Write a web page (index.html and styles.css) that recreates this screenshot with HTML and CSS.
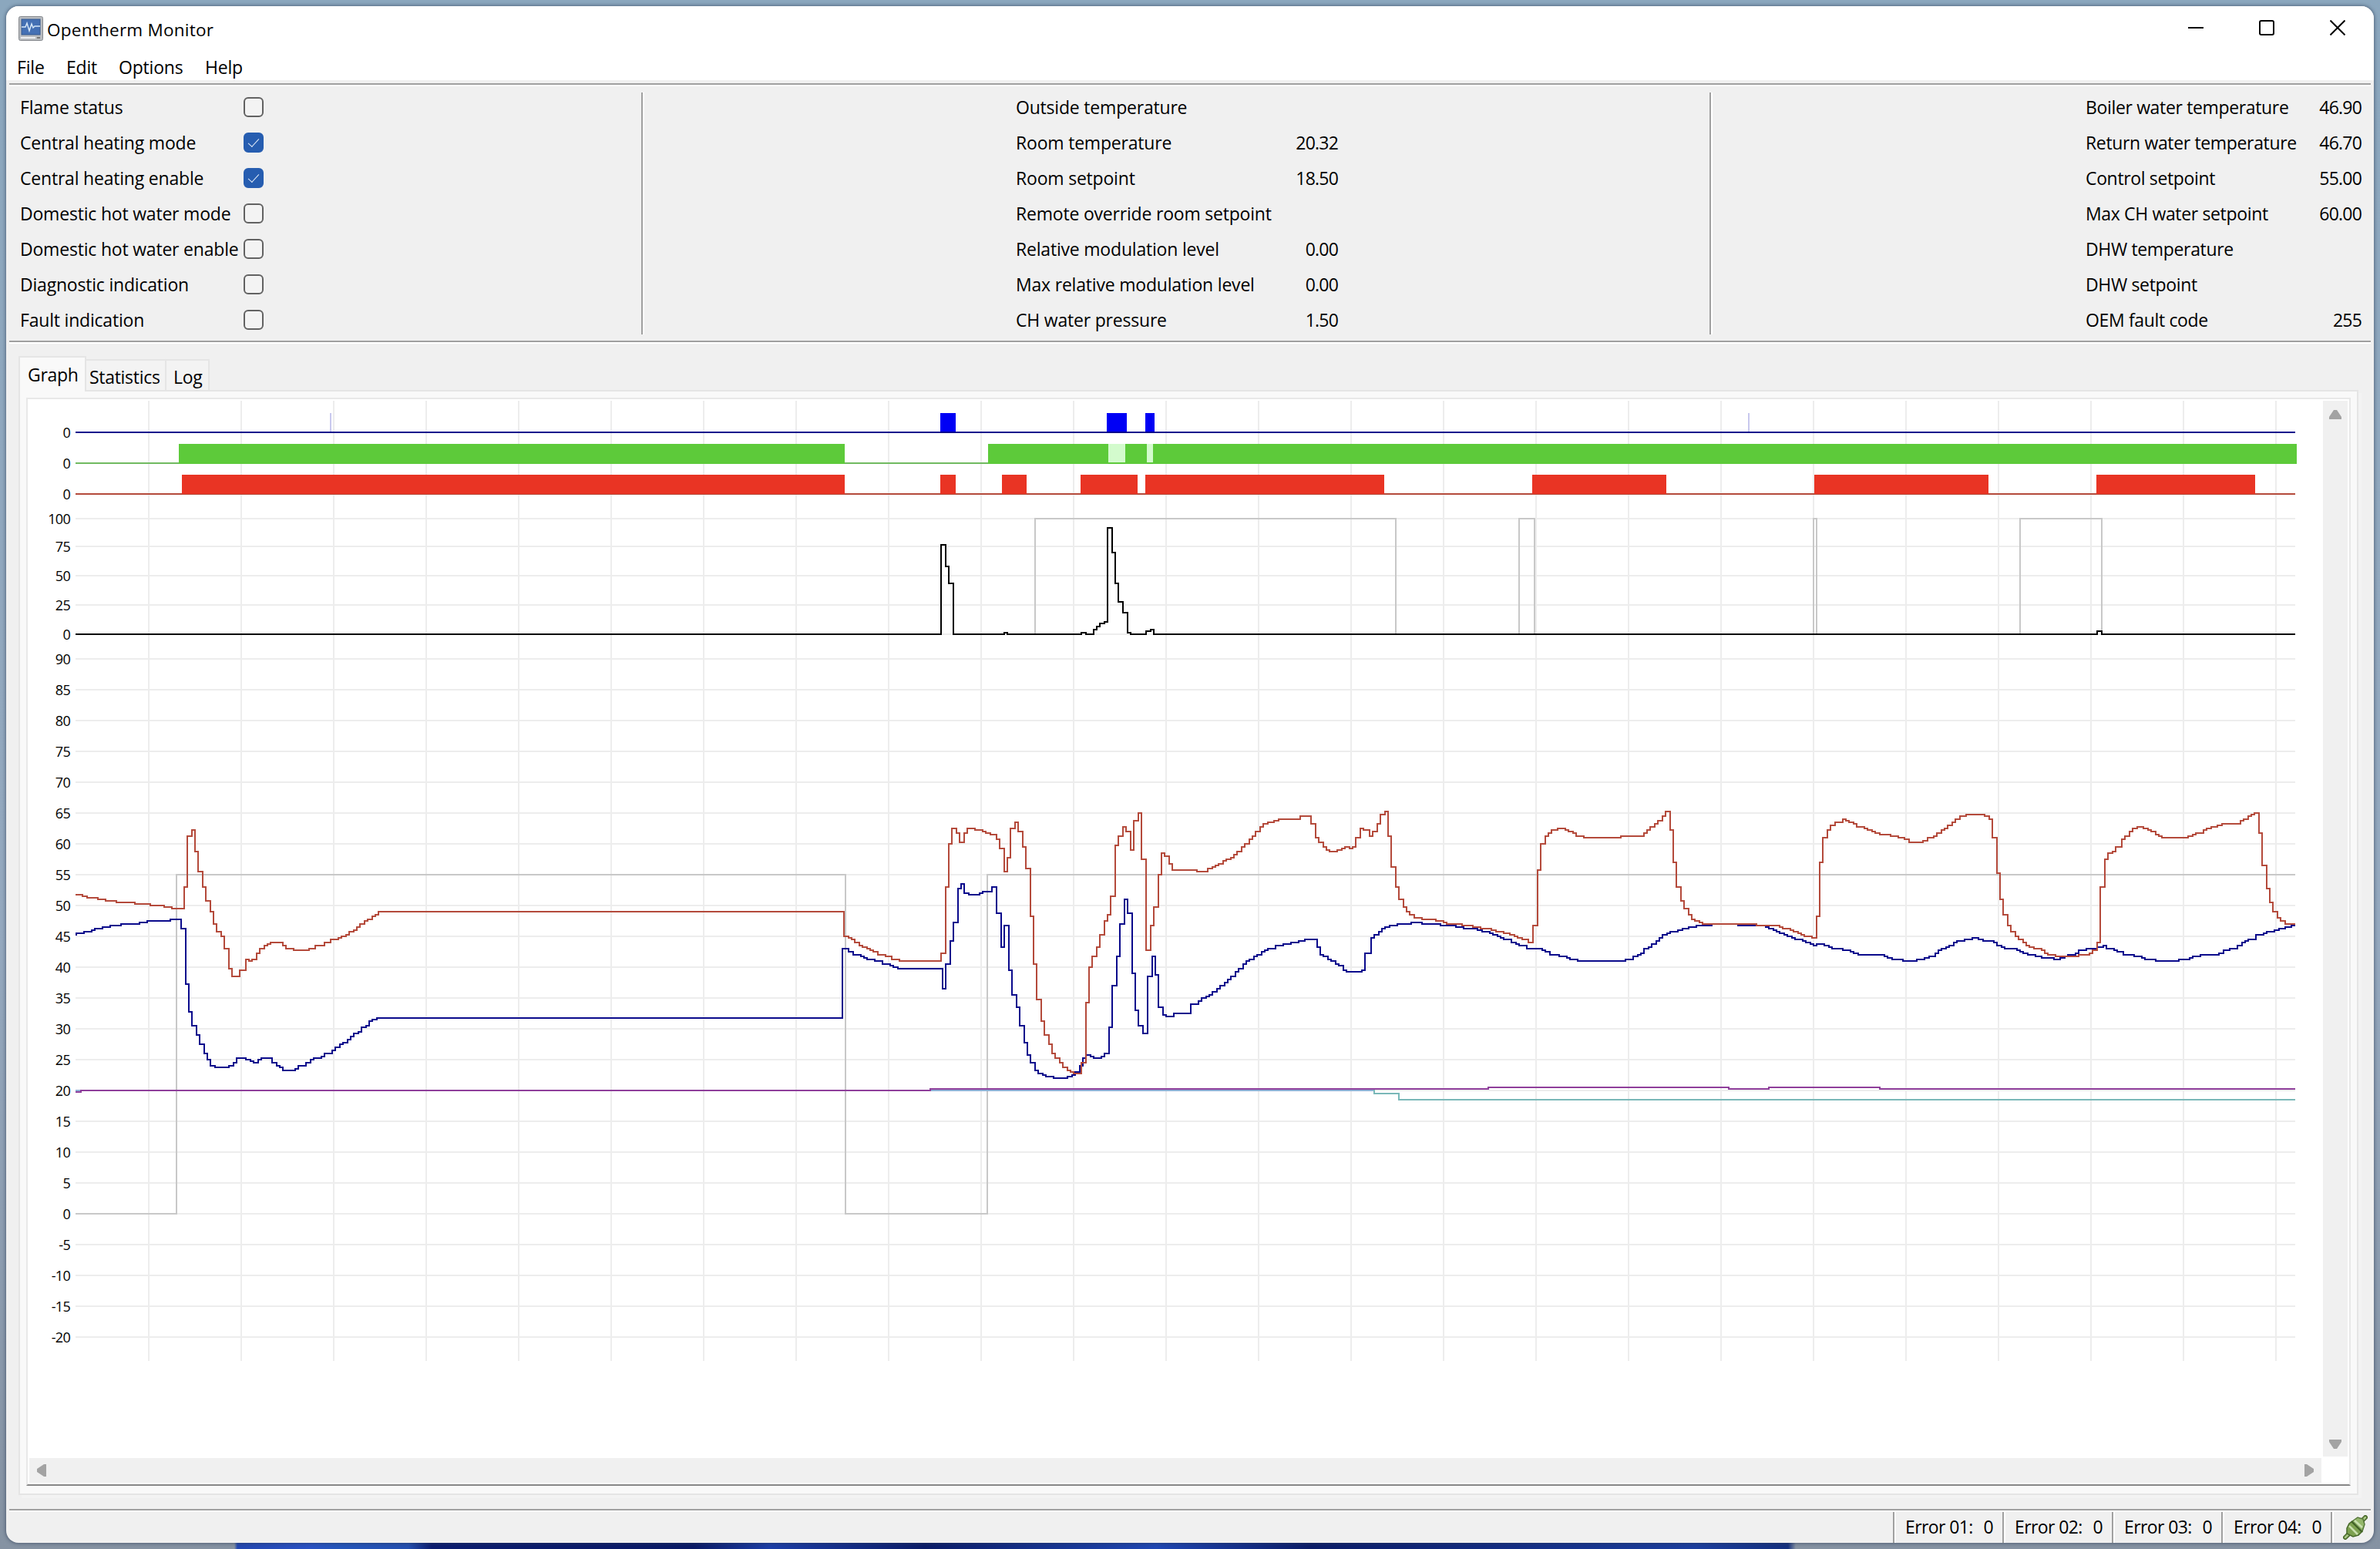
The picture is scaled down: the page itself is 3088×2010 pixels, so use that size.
FILE: index.html
```html
<!DOCTYPE html>
<html lang="en">

<head>
  <meta charset="UTF-8">
  <meta name="viewport" content="width=device-width, initial-scale=1.0">
  <title>Opentherm Monitor</title>
  <link rel="stylesheet" href="styles.css">
</head>

<body>
  <div class="window">
    <header class="title-bar">
      <svg class="app-icon" width="32" height="32" viewBox="0 0 32 32">
        <rect x="0.5" y="0.5" width="31" height="31" rx="2" fill="#b9bcc0" stroke="#85888d" />
        <rect x="4" y="4" width="24" height="20" fill="#4470b4" stroke="#35588f" />
        <path d="M4 14H9L11 9L14 19L17 10L19 15L21 13H28" fill="none" stroke="#d5e6f7" stroke-width="1.500" />
        <path d="M3 28H22" stroke="#eceef0" stroke-width="2" />
        <path d="M24 28H28" stroke="#777" stroke-width="2" />
      </svg>
      <h1>Opentherm Monitor</h1>
      <div class="window-buttons">
        <svg width="20" height="20" viewBox="0 0 20 20"><path d="M0 10H20" /></svg>
        <svg width="20" height="20" viewBox="0 0 20 20"><rect x="1" y="1" width="18" height="18" rx="2" /></svg>
        <svg width="20" height="20" viewBox="0 0 20 20"><path d="M0.500 0.500L19.500 19.500M19.500 0.500L0.500 19.500" /></svg>
      </div>
    </header>

    <nav>
      <ul class="menu-bar">
        <li class="menu-file">File</li>
        <li class="menu-edit">Edit</li>
        <li class="menu-options">Options</li>
        <li class="menu-help">Help</li>
      </ul>
    </nav>

    <hr class="line">

    <section class="status-panel">
      <div class="group flags">
        <label><span>Flame status</span><input type="checkbox"></label>
        <label><span>Central heating mode</span><input type="checkbox" checked></label>
        <label><span>Central heating enable</span><input type="checkbox" checked></label>
        <label><span>Domestic hot water mode</span><input type="checkbox"></label>
        <label><span>Domestic hot water enable</span><input type="checkbox"></label>
        <label><span>Diagnostic indication</span><input type="checkbox"></label>
        <label><span>Fault indication</span><input type="checkbox"></label>
      </div>
      <div class="divider"></div>
      <div class="group room">
        <p><span>Outside temperature</span></p>
        <p><span>Room temperature</span><span>20.32</span></p>
        <p><span>Room setpoint</span><span>18.50</span></p>
        <p><span>Remote override room setpoint</span></p>
        <p><span>Relative modulation level</span><span>0.00</span></p>
        <p><span>Max relative modulation level</span><span>0.00</span></p>
        <p><span>CH water pressure</span><span>1.50</span></p>
      </div>
      <div class="divider"></div>
      <div class="group boiler">
        <p><span>Boiler water temperature</span><span>46.90</span></p>
        <p><span>Return water temperature</span><span>46.70</span></p>
        <p><span>Control setpoint</span><span>55.00</span></p>
        <p><span>Max CH water setpoint</span><span>60.00</span></p>
        <p><span>DHW temperature</span></p>
        <p><span>DHW setpoint</span></p>
        <p><span>OEM fault code</span><span>255</span></p>
      </div>
    </section>

    <hr class="line">

    <main>
      <div class="tabs">
        <div class="tab active">Graph</div>
        <div class="tab tab-statistics">Statistics</div>
        <div class="tab tab-log">Log</div>
      </div>
      <div class="tab-page">
        <div class="graph-frame">
          <svg class="graph" width="2974" height="1370" viewBox="38 520 2974 1370">
            <g id="grid"></g>
            <g id="labels"></g>

            <!-- hot water, central heating and flame on/off bars -->
            <path class="hot-water" d="M98 561H2978" />
            <path class="central" d="M98 601H2978" />
            <path class="boiler" d="M98 641H2978" />
            <path class="tick" d="M429 536V560M2269 536V560" />
            <g id="bars"></g>

            <!-- max modulation and control setpoint -->
            <path class="limit" d="M1343 823V673H1811V823M1971 823V673H1991V823M2353 823V673H2357V823M2621 823V673H2727V823" />
            <path class="limit" d="M98 1575H229V1135H1097V1575H1281V1135H2978" />

            <!-- modulation -->
            <path class="modulation" d="M98 823H1221V707H1227V735H1231V757H1237V823H1303V821H1307V823H1403V821H1409V823H1419V817H1423V813H1427V809H1433V807H1437V685H1443V717H1447V757H1451V781H1457V795H1463V821H1467V823H1487V819H1493V817H1497V823H2721V819H2727V823H2978" />

            <!-- return water -->
            <path class="return" d="M99 1214V1211H109V1209H119V1207H123V1205H133V1203H143V1201H157V1199H181V1197H191V1195H221V1193H235V1205H241V1277H245V1313H249V1331H255V1343H259V1355H265V1367H269V1375H273V1383H279V1385H297V1383H303V1379H307V1373H319V1375H325V1377H329V1379H335V1375H339V1373H353V1379H359V1383H363V1385H367V1389H383V1387H387V1383H397V1379H403V1375H407V1373H417V1371H421V1367H431V1363H435V1359H441V1355H445V1353H451V1349H455V1345H459V1341H465V1339H469V1333H475V1331H479V1325H483V1323H489V1321
              H1093V1231H1101V1235H1107V1239H1117V1241H1121V1243H1125V1245H1135V1247H1145V1251H1155V1253H1159V1255H1165V1257H1223V1283H1227V1251H1233V1221H1237V1197H1243V1153H1247V1147H1251V1159H1257V1161H1271V1159H1275V1157H1287V1151H1293V1185H1299V1229H1303V1201H1309V1259H1313V1291H1319V1307H1323V1331H1329V1353H1333V1369H1337V1379H1343V1389H1347V1393H1353V1395H1357V1397H1367V1399H1385V1397H1391V1395H1395V1391H1401V1383H1405V1373H1409V1369H1415V1371H1419V1373H1429V1371H1433V1367H1439V1333H1443V1279H1449V1241H1453V1199H1459V1167H1463V1185H1469V1263H1473V1311H1477V1331H1483V1341H1489V1267H1495V1241H1499V1265H1503V1307H1509V1317H1513V1319H1523V1315
              H1545V1303H1555V1299H1559V1295H1565V1293H1569V1291H1573V1287H1579V1283H1583V1279H1589V1275H1593V1271H1597V1267H1603V1261H1607V1257H1613V1251H1617V1247H1621V1245H1627V1241H1631V1239H1637V1235H1641V1233H1645V1231H1655V1227H1665V1225H1675V1223H1685V1221H1693V1219H1709V1229H1713V1239H1717V1241H1723V1245H1727V1247H1733V1251H1737V1253H1743V1259H1747V1261H1767V1259H1771V1237H1779V1217H1783V1213H1789V1209H1793V1205H1797V1203H1803V1201H1813V1199H1831V1197H1845V1199
              H1869V1201H1889V1203H1899V1205H1917V1207H1923V1209H1933V1211H1937V1213H1943V1215H1947V1217H1951V1219H1961V1223H1967V1225H1971V1227H1981V1231H2001V1233H2005V1235H2011V1239H2023V1241H2033V1243H2037V1245H2047V1247H2109V1245H2119V1241H2125V1239H2129V1237H2133V1231H2139V1229H2143V1225H2149V1221H2153V1217H2157V1213H2163V1211H2167V1209H2177V1207H2183V1205H2191V1203H2201V1201H2221V1199H2255V1201H2291V1203H2295V1205H2301V1207H2305V1209H2309V1211H2315V1213H2319V1215H2325V1217H2329V1219H2339V1221H2343V1223H2349V1225H2353V1227H2357V1225H2367V1227H2373V1229H2377V1231H2391V1233H2401V1235H2405V1237H2411V1239
              H2445V1241H2449V1243H2455V1245H2469V1247H2487V1245H2497V1243H2503V1241H2511V1237H2515V1233H2519V1231H2525V1229H2529V1227H2535V1223H2539V1221H2549V1219H2559V1217H2567V1219H2573V1221H2587V1223H2591V1227H2597V1229H2601V1231H2617V1233H2621V1235H2625V1237H2631V1239H2641V1241H2649V1243H2665V1245H2673V1243H2679V1241H2683V1239H2693V1237H2697V1233H2707V1231H2721V1229H2729V1227H2733V1231H2743V1233H2747V1235H2755V1239H2769V1241H2779V1243H2783V1245H2797V1247H2827V1245H2841V1243H2845V1241H2855V1239H2879V1237H2885V1233H2893V1231H2903V1227H2909V1223H2913V1221H2917V1219H2927V1213H2937V1211H2941V1209H2951V1207H2957V1205H2965V1203H2973V1201H2978" />

            <!-- boiler water -->
            <path class="boiler" d="M98 1161H107V1163H113V1165H127V1167H137V1169H151V1171H175V1173H195V1175H213V1177H223V1179H239V1151H243V1085H249V1077H253V1105H257V1131H263V1151H267V1169H273V1183H277V1199H281V1209H287V1215H291V1231H297V1257H301V1267H311V1259H319V1245H323V1247H327V1245H333V1237H337V1231H343V1227H347V1225H351V1223H367V1227H371V1231H381V1233H401V1231H409V1227H421V1223H429V1219H439V1217H443V1215H449V1213H453V1209H459V1207H463V1203H467V1199H473V1195H477V1193H483V1189H487V1187H491V1183
              H1095V1215H1101V1217H1105V1219H1109V1223H1115V1227H1119V1229H1125V1231H1129V1233H1133V1235H1139V1239H1149V1241H1157V1245H1167V1247H1221V1237H1227V1151H1231V1095H1235V1075H1241V1081H1245V1093H1251V1081H1255V1075H1265V1077H1275V1079H1279V1081H1285V1083H1293V1089H1297V1101H1303V1131H1307V1113H1311V1075H1317V1067H1321V1079H1327V1099H1331V1127H1337V1189H1341V1251H1345V1297H1351V1325H1355V1343H1361V1355H1365V1367H1369V1373H1375V1379H1379V1385H1385V1389H1389V1391H1393V1393H1403V1379H1409V1301H1413V1255H1417V1241H1423V1229H1427V1213H1433V1195H1437V1187H1441V1163H1447V1097H1451V1085H1457V1073H1461V1079H1467V1103H1471V1065H1477V1055H1481V1115H1487V1233H1493V1201H1497V1177H1503V1135H1507V1107H1511V1111H1517V1121H1521V1129
              H1553V1131H1567V1127H1573V1125H1577V1123H1581V1121H1587V1117H1591V1115H1597V1113H1601V1109H1605V1105H1611V1099H1615V1095H1621V1089H1625V1085H1629V1079H1635V1073H1639V1069H1645V1067H1653V1065H1659V1063H1687V1059H1701V1069H1707V1087H1711V1093H1717V1099H1721V1103H1725V1105H1735V1103H1741V1101H1745V1099H1751V1101H1755V1099H1759V1087H1765V1075H1769V1077H1777V1085H1781V1079H1787V1069H1791V1057H1797V1053H1801V1085H1805V1125H1811V1151H1815V1167H1821V1177H1825V1183H1829V1187H1835V1191H1845V1193
              H1863V1195H1873V1197H1877V1199H1897V1201H1911V1203H1921V1205H1935V1207H1941V1209H1951V1211H1959V1213H1965V1215H1969V1217H1975V1219H1983V1223H1989V1201H1995V1129H1999V1095H2005V1085H2009V1081H2013V1077H2021V1075H2031V1077H2035V1079H2041V1081H2045V1085H2055V1087H2103V1085H2133V1081H2137V1077H2141V1073H2147V1069H2151V1065H2157V1059H2161V1053H2167V1077H2171V1119H2175V1151H2181V1169H2185V1179H2191V1187H2195V1193H2199V1195H2205V1197H2209V1199H2279V1201H2309V1203H2313V1205H2323V1207H2327V1209H2333V1211H2337V1213H2341V1215H2351V1217H2357V1189H2361V1119H2365V1087H2371V1077H2375V1071H2381V1067H2391V1063H2395V1065H2399V1067H2405V1069H2409V1073H2419V1075
              H2423V1077H2429V1079H2433V1081H2439V1083H2453V1085H2463V1087H2471V1089H2477V1093H2495V1091H2501V1087H2509V1085H2513V1081H2519V1077H2523V1075H2527V1071H2533V1067H2537V1063H2543V1059H2551V1057H2575V1059H2581V1063H2585V1087H2591V1133H2595V1167H2599V1187H2605V1201H2609V1209H2615V1215H2619V1219H2625V1223H2629V1227H2633V1229H2639V1231H2649V1233H2653V1237H2657V1239H2667V1241H2697V1239H2711V1237H2715V1233H2721V1223H2725V1151H2731V1115H2735V1107H2741V1105H2745V1099H2753V1089H2757V1085H2763V1079H2767V1075H2773V1073H2781V1075H2787V1077H2791V1079H2797V1083H2801V1085H2805V1087H2839V1085H2845V1083H2849V1081H2859V1077H2863V1075H2869V1073H2877V1071H2883V1069H2907V1065H2911V1063H2917V1059H2921V1057H2925V1055H2931V1081H2935V1123H2941V1153H2945V1171H2949V1183H2955V1191H2959V1195H2965V1199H2978" />

            <!-- room setpoint and room temperature -->
            <path class="setpoint" d="M98 1415H1783V1419H1815V1427H2978" />
            <path class="setpoint-close" d="M98 1415H105M1207 1415H1782" />
            <path class="room-temp" d="M98 1417H105V1415H1207V1413H1931V1411H2243V1413H2295V1411H2439V1413H2978" />
          </svg>

          <div class="scroll-v">
            <svg width="16" height="12" viewBox="0 0 16 12"><path d="M0 12V9L6 0H10L16 9V12Z" /></svg>
            <svg width="16" height="12" viewBox="0 0 16 12"><path d="M0 0V3L6 12H10L16 3V0Z" /></svg>
          </div>
          <div class="scroll-h">
            <svg width="12" height="16" viewBox="0 0 12 16"><path d="M12 0H9L0 6V10L9 16H12Z" /></svg>
            <svg width="12" height="16" viewBox="0 0 12 16"><path d="M0 0H3L12 6V10L3 16H0Z" /></svg>
          </div>
        </div>
      </div>
    </main>

    <hr class="line">

    <footer class="status-bar">
      <div class="cell">Error 01: <span>0</span></div>
      <div class="cell">Error 02: <span>0</span></div>
      <div class="cell">Error 03: <span>0</span></div>
      <div class="cell">Error 04: <span>0</span></div>
      <div class="cell plug">
        <svg width="32" height="32" viewBox="0 0 32 32">
          <path d="M3 29L8 24M24 8L29 3" stroke="#4c6b2c" stroke-width="6" stroke-linecap="round" />
          <path d="M3 29L8 24M24 8L29 3" stroke="#a9c886" stroke-width="2.500" stroke-linecap="round" />
          <path d="M5 17L8 11L12 8L25 21L20 26L13 28L5 24Z" fill="#7da150" stroke="#47682a" stroke-width="1.500" />
          <path d="M12 8L19 3L26 5L28 12L25 21Z" fill="#94b76b" stroke="#55763a" stroke-width="1.500" />
          <path d="M8 14L19 25M15 7L25 16" stroke="#c9dfae" stroke-width="2.500" />
          <path d="M11 8.500L24.500 22" stroke="#3d5c22" stroke-width="1.500" />
        </svg>
      </div>
    </footer>
  </div>

  <script>
    const left = 98;
    const right = 2978;

    let grid = '';
    let labels = '';

    function addLabel(text, y) {
      labels += `<text x="91" y="${y + 7}">${text}</text>`;
    }

    // hour lines
    for (let x = 193; x < right; x += 120) {
      grid += `<path d="M${x} 520V1766" />`;
    }

    for (let y of [561, 601, 641]) {
      addLabel(0, y);
    }

    // modulation scale
    let levels = [[100, 673], [75, 709], [50, 747], [25, 785], [0, 823]];
    for (let [level, y] of levels) {
      grid += `<path d="M${left} ${y}H${right}" />`;
      addLabel(level, y);
    }

    // temperature scale, 8px per degree
    for (let t = 90; t >= -20; t -= 5) {
      let y = 1575 - t * 8;
      grid += `<path d="M${left} ${y}H${right}" />`;
      addLabel(t, y);
    }

    document.querySelector('#grid').innerHTML = grid;
    document.querySelector('#labels').innerHTML = labels;

    let bars = '';
    function addBars(name, y, height, list) {
      for (let [from, to] of list) {
        bars += `<rect class="${name}" x="${from}" y="${y}" width="${to - from}" height="${height}" />`;
      }
    }

    addBars('bar-blue', 536, 24, [[1220, 1240], [1436, 1462], [1486, 1498]]);
    addBars('bar-green', 576, 26, [[232, 1096], [1282, 2980]]);
    addBars('bar-light', 576, 24, [[1438, 1460], [1488, 1496]]);
    addBars('bar-red', 616, 25, [[236, 1096], [1220, 1240], [1300, 1332], [1402, 1476], [1486, 1796], [1988, 2162], [2354, 2580], [2720, 2926]]);
    document.querySelector('#bars').innerHTML = bars;
  </script>
</body>

</html>
```
FILE: styles.css
```css
* {
  box-sizing: border-box;
}

body {
  margin: 0;
  padding: 8px;
  height: 2010px;
  overflow: hidden;
  font-family: "Open Sans", "Noto Sans", sans-serif;
  font-size: 23px;
  color: #000;
  background:
    linear-gradient(90deg, transparent 304px, #2347b0 308px, #2a52c4 400px, #2456bb 440px, #2450b0 530px, #0c1d70 560px, #0a1a66 900px, #1d3fa8 1000px, #0b1c68 1200px, #2048b4 1500px, #0b1c68 1700px, #1c3f9f 2200px, #14307f 2320px, transparent 2330px) left bottom / 100% 8px no-repeat,
    linear-gradient(180deg, #8ba7be, #95a9bf 60%, #8592a2);
}

.window {
  width: 3072px;
  height: 1994px;
  background-color: #f0f0f0;
  border-radius: 16px;
  overflow: hidden;
  box-shadow: 0 0 4px 1px rgba(40, 55, 80, 0.55);
  display: flex;
  flex-direction: column;
}

.title-bar {
  display: flex;
  align-items: center;
  height: 56px;
  padding: 0 37px 0 16px;
  background-color: #fff;
}

.app-icon {
  margin-top: 2px;
}

h1 {
  margin: 4px 0 0 5px;
  font-size: 22.500px;
  font-weight: normal;
  letter-spacing: 0.25px;
}

.window-buttons {
  display: flex;
  gap: 72px;
  margin-left: auto;
}

.window-buttons svg {
  fill: none;
  stroke: #000;
  stroke-width: 2;
}

.menu-bar {
  display: flex;
  height: 40px;
  margin: 0;
  padding: 0 0 0 14px;
  list-style-type: none;
  line-height: 47px;
  background-color: #fff;
}

.menu-file {
  width: 64px;
}

.menu-edit {
  width: 68px;
}

.menu-options {
  width: 112px;
}

.line {
  width: 3064px;
  height: 4px;
  margin: 0 4px;
  border: none;
  border-top: 2px solid #a0a0a0;
  background-color: #fff;
  flex: none;
}

nav {
  margin-bottom: 4px;
  letter-spacing: -0.2px;
}

.status-panel {
  display: grid;
  grid-template-columns: 824px 4px 1382px 4px 1fr;
  height: 330px;
  padding: 4px 0;
}

.divider {
  margin: 4px 0;
  border-left: 2px solid #a0a0a0;
  border-right: 2px solid #fff;
}

.group {
  letter-spacing: -0.2px;
  line-height: 47px;
}

.group p,
.group label {
  display: flex;
  align-items: center;
  justify-content: space-between;
  height: 46px;
  margin: 0;
  white-space: nowrap;
}

.flags {
  width: 334px;
  padding-left: 18px;
}

.room {
  width: 418px;
  justify-self: center;
}

.group.boiler {
  width: 358px;
  justify-self: end;
  margin-right: 16px;
  letter-spacing: -0.35px;
}

.group p span + span {
  letter-spacing: -0.8px;
}

input[type="checkbox"] {
  appearance: none;
  display: grid;
  place-content: center;
  width: 26px;
  height: 26px;
  margin: 0;
  border: 2px solid #626262;
  border-radius: 6px;
  background-color: #f3f3f3;
}

input[type="checkbox"]:checked {
  border-color: #265db0;
  background-color: #265db0;
}

input[type="checkbox"]:checked::before {
  content: "";
  width: 13px;
  height: 6px;
  margin-top: -4px;
  border-left: 1px solid #dce8f7;
  border-bottom: 1px solid #dce8f7;
  transform: rotate(-48deg);
}

main {
  height: 1512px;
  padding: 16px 20px 0 16px;
}

.tabs {
  display: flex;
  align-items: flex-end;
  height: 46px;
  margin-bottom: -2px;
  letter-spacing: -0.3px;
}

.tab {
  height: 42px;
  border: 2px solid #e5e5e5;
  border-left: none;
  background-color: #f3f3f3;
  line-height: 43px;
}

.tab.active {
  width: 88px;
  height: 46px;
  padding-left: 10px;
  border-left: 2px solid #e5e5e5;
  border-bottom: none;
  background-color: #f9f9f9;
  line-height: 44px;
  position: relative;
}

.tab-statistics {
  width: 104px;
  padding-left: 4px;
}

.tab-log {
  width: 56px;
  padding-left: 9px;
}

.tab-page {
  height: 1434px;
  padding: 8px;
  border: 2px solid #e5e5e5;
  background-color: #f9f9f9;
  box-shadow: 4px 4px 0 #f3f3f3;
}

.graph-frame {
  display: grid;
  grid-template-columns: 2974px 32px;
  grid-template-rows: 1370px 32px;
  gap: 2px;
  width: 3016px;
  height: 1412px;
  padding: 2px;
  border: 2px solid #e8e8e8;
  border-bottom-color: #868686;
  background-color: #fff;
}

.graph path {
  fill: none;
  stroke-width: 2;
  shape-rendering: crispEdges;
}

#grid path {
  stroke: #ededed;
}

#labels text {
  font-size: 18px;
  letter-spacing: -0.7px;
  text-anchor: end;
}

.graph .hot-water,
.graph .return {
  stroke: #0a0a8c;
}

.graph .central {
  stroke: #70ba60;
}

.graph .boiler {
  stroke: #b44a3b;
}

.graph .tick {
  stroke: #c8c8ee;
}

.graph .limit {
  stroke: #c8c8c8;
}

.graph .modulation {
  stroke: #000;
}

.graph .setpoint {
  stroke: #7ab8b8;
}

.graph .setpoint-close {
  stroke: #8fb0d6;
}

.graph .room-temp {
  stroke: #8f3f9b;
}

.bar-blue {
  fill: #0000f5;
}

.bar-green {
  fill: #5dca3a;
}

.bar-light {
  fill: #d3fbcd;
}

.bar-red {
  fill: #e93424;
}

.scroll-v,
.scroll-h {
  display: flex;
  align-items: center;
  justify-content: space-between;
  background-color: #f0f0f0;
  fill: #a3a3a3;
}

.scroll-v {
  flex-direction: column;
  padding: 12px 0 10px;
}

.scroll-h {
  padding: 0 10px;
}

.status-bar {
  display: flex;
  justify-content: flex-end;
  height: 40px;
}

.cell {
  display: flex;
  justify-content: space-between;
  width: 142px;
  padding: 0 12px 0 14px;
  border-left: 2px solid #a0a0a0;
  box-shadow: inset 2px 0 #fff;
  line-height: 38px;
  letter-spacing: -0.6px;
}

.plug {
  width: 56px;
  padding: 4px 0 0 14px;
}
```
